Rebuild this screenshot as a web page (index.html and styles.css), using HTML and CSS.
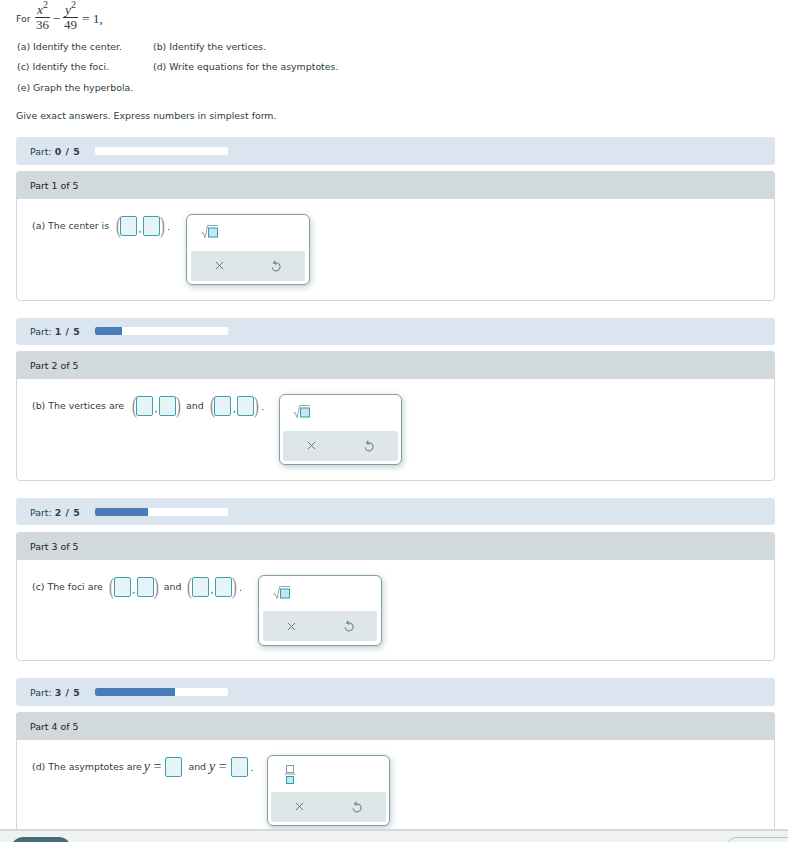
FILE: index.html
```html
<!DOCTYPE html>
<html lang="en">
<head>
<meta charset="utf-8">
<title>Hyperbola</title>
<link rel="stylesheet" href="styles.css">
</head>
<body>
<svg class="defs" width="0" height="0" aria-hidden="true">
  <symbol id="i-x" viewBox="0 0 10 10"><path d="M1 1l8 8M9 1L1 9" fill="none" stroke="#5b7a85" stroke-width="1.1"/></symbol>
  <symbol id="i-undo" viewBox="0 0 10 12"><path d="M3 3.4A4 4 0 1 1 1.1 7.2M4.2 .6L2.6 3.3l3 1" fill="none" stroke="#6d8892" stroke-width="1.1"/></symbol>
  <symbol id="i-sqrt" viewBox="0 0 17 13"><path d="M.3 8.3l1.7-.8 2.1 5L6.6 .5H17" fill="none" stroke="#8a9ba3" stroke-width=".9"/><rect x="7.5" y="3" width="9" height="9" fill="#c5e6ee" stroke="#2f9db1"/></symbol>
  <symbol id="i-frac" viewBox="0 0 12 19"><rect x="2.5" y=".5" width="7" height="7" fill="#fff" stroke="#8a9ba3"/><path d="M.5 9h11" stroke="#8a9ba3"/><rect x="2.5" y="11.5" width="7" height="7" fill="#c5e6ee" stroke="#2f9db1"/></symbol>
</svg>

<main class="page">
  <section class="problem">
    <div class="equation">
      <span class="for">For</span>
      <span class="frac"><span class="num"><i>x</i><sup>2</sup></span><span class="den">36</span></span>
      <span class="op minus">−</span>
      <span class="frac"><span class="num"><i>y</i><sup>2</sup></span><span class="den">49</span></span>
      <span class="op equals">=</span><span class="op">1,</span>
    </div>
    <div class="tasks">
      <span>(a) Identify the center.</span><span>(b) Identify the vertices.</span>
      <span>(c) Identify the foci.</span><span>(d) Write equations for the asymptotes.</span>
      <span>(e) Graph the hyperbola.</span>
    </div>
    <p class="note">Give exact answers. Express numbers in simplest form.</p>
  </section>

  <div class="progress"><span class="label">Part: <b>0 / 5</b></span><div class="track"><div class="fill" style="width:0%"></div></div></div>
  <section class="panel">
    <h2 class="panel-head">Part 1 of 5</h2>
    <div class="panel-body">
      <div class="answer"><span>(a) The center is</span>
        <span class="point"><span class="paren">(</span><span class="box"></span><span class="comma">,</span><span class="box"></span><span class="paren">)</span></span><span class="dot">.</span>
      </div>
      <div class="palette pal-a">
        <div class="pal-top"><svg class="ic-sqrt"><use href="#i-sqrt"/></svg></div>
        <div class="pal-bar"><span class="pal-btn"><svg class="ic-x"><use href="#i-x"/></svg></span><span class="pal-btn"><svg class="ic-undo"><use href="#i-undo"/></svg></span></div>
      </div>
    </div>
  </section>

  <div class="progress"><span class="label">Part: <b>1 / 5</b></span><div class="track"><div class="fill" style="width:20%"></div></div></div>
  <section class="panel">
    <h2 class="panel-head">Part 2 of 5</h2>
    <div class="panel-body">
      <div class="answer"><span>(b) The vertices are</span>
        <span class="point point-wide"><span class="paren">(</span><span class="box"></span><span class="comma">,</span><span class="box"></span><span class="paren">)</span></span>
        <span>and</span>
        <span class="point"><span class="paren">(</span><span class="box"></span><span class="comma">,</span><span class="box"></span><span class="paren">)</span></span><span class="dot">.</span>
      </div>
      <div class="palette pal-b">
        <div class="pal-top"><svg class="ic-sqrt"><use href="#i-sqrt"/></svg></div>
        <div class="pal-bar"><span class="pal-btn"><svg class="ic-x"><use href="#i-x"/></svg></span><span class="pal-btn"><svg class="ic-undo"><use href="#i-undo"/></svg></span></div>
      </div>
    </div>
  </section>

  <div class="progress"><span class="label">Part: <b>2 / 5</b></span><div class="track"><div class="fill" style="width:40%"></div></div></div>
  <section class="panel">
    <h2 class="panel-head">Part 3 of 5</h2>
    <div class="panel-body">
      <div class="answer"><span>(c) The foci are</span>
        <span class="point"><span class="paren">(</span><span class="box"></span><span class="comma">,</span><span class="box"></span><span class="paren">)</span></span>
        <span>and</span>
        <span class="point"><span class="paren">(</span><span class="box"></span><span class="comma">,</span><span class="box"></span><span class="paren">)</span></span><span class="dot">.</span>
      </div>
      <div class="palette pal-c">
        <div class="pal-top"><svg class="ic-sqrt"><use href="#i-sqrt"/></svg></div>
        <div class="pal-bar"><span class="pal-btn"><svg class="ic-x"><use href="#i-x"/></svg></span><span class="pal-btn"><svg class="ic-undo"><use href="#i-undo"/></svg></span></div>
      </div>
    </div>
  </section>

  <div class="progress"><span class="label">Part: <b>3 / 5</b></span><div class="track"><div class="fill" style="width:60%"></div></div></div>
  <section class="panel">
    <h2 class="panel-head">Part 4 of 5</h2>
    <div class="panel-body">
      <div class="answer"><span>(d) The asymptotes are</span>
        <span class="lhs"><i>y</i> =</span><span class="box"></span>
        <span class="and">and</span>
        <span class="lhs"><i>y</i> =</span><span class="box"></span><span class="dot">.</span>
      </div>
      <div class="palette pal-d">
        <div class="pal-top pal-top-frac"><svg class="ic-frac"><use href="#i-frac"/></svg></div>
        <div class="pal-bar"><span class="pal-btn"><svg class="ic-x"><use href="#i-x"/></svg></span><span class="pal-btn"><svg class="ic-undo"><use href="#i-undo"/></svg></span></div>
      </div>
    </div>
  </section>
</main>

<footer class="footer"><span class="btn-primary"></span><span class="btn-outline"></span></footer>
</body>
</html>
```

FILE: styles.css
```css
html, body { margin: 0; height: 842px; overflow: hidden; background: #fff; }
body { font-family: "DejaVu Sans", sans-serif; font-size: 9.4px; color: #2e3c42; line-height: 12px; }
.defs { position: absolute; }
.page { padding: 0 13px 0 16px; }

.problem { height: 137.2px; }
.equation { display: flex; align-items: flex-start; height: 34px; font-family: "Liberation Serif", serif; font-size: 13.5px; }
.for { font-family: "DejaVu Sans", sans-serif; font-size: 9.4px; margin-top: 13px; width: 19px; }
.frac { display: flex; flex-direction: column; align-items: center; width: 15px; }
.num { box-sizing: border-box; height: 18px; padding-top: 3px; border-bottom: 1px solid #333; width: 100%; text-align: center; line-height: 14px; white-space: nowrap; }
.num sup { font-size: 10px; line-height: 0; vertical-align: 6px; }
.den { line-height: 14px; font-size: 13px; }
.op { line-height: 16px; margin-top: 11px; }
.minus { width: 13px; text-align: center; }
.equals { margin: 11px 3px 0 4px; }

.tasks { display: grid; grid-template-columns: 136px auto; justify-content: start; row-gap: 8.5px; margin: 6.5px 0 0 1px; }
.note { margin: 16.5px 0 0; }

.progress { display: flex; align-items: center; height: 27.4px; padding-left: 14px; gap: 14px; background: #dae5ef; border-radius: 3px; }
.label { width: 51px; padding-top: 2px; white-space: nowrap; }
.label b { font-weight: 700; letter-spacing: .5px; }
.track { width: 133px; height: 8px; background: #fff; border-radius: 2px; overflow: hidden; }
.fill { height: 100%; background: #4a7db7; }

.panel { box-sizing: border-box; height: 129.6px; margin: 6.5px 0 16.9px; border: 1px solid #cfd8dc; border-radius: 4px; }
.panel-head { box-sizing: border-box; margin: -1px -1px 0; height: 28px; padding: 1px 0 0 14px; background: #d2d9dc; border-radius: 4px 4px 0 0; font-weight: 400; font-size: 9.4px; line-height: 27px; color: #222; }
.panel-body { display: flex; align-items: flex-start; padding: 15px 0 0 15px; }

.answer { display: flex; align-items: center; height: 22px; margin-top: 1px; white-space: nowrap; }
.point { display: inline-flex; align-items: center; margin-left: 6.5px; }
.point-wide { margin-left: 7.5px; }
.point + span:not(.dot) { margin-left: 5.5px; }
.point + span + .point { margin-left: 6px; }
.paren { display: inline-flex; justify-content: center; width: 4.5px; font-family: "Liberation Serif", serif; font-size: 23px; line-height: 20px; color: #888; transform: scaleX(.62); }
.box { box-sizing: border-box; width: 17px; height: 20px; background: #e6f4f8; border: 1px solid #3f9fae; border-radius: 2px; }
.comma { width: 6px; text-align: center; margin-top: 6px; }
.dot { margin-left: 2.5px; margin-top: 2px; }
.lhs { font-family: "Liberation Serif", serif; font-size: 14px; margin: 0 4px 0 2px; }
.and { margin-left: 6px; }
.and + .lhs { margin-left: 3px; }

.palette { box-sizing: border-box; width: 123.5px; height: 71px; padding: 0 3.5px 3.5px; background: #fff; border: 1px solid #7f9ea8; border-radius: 6px; box-shadow: 1px 2px 6px rgba(70, 100, 110, .35); display: flex; flex-direction: column; justify-content: space-between; }
.pal-a { margin-left: 16px; }
.pal-b { margin-left: 14.5px; }
.pal-c { margin-left: 16.5px; }
.pal-d { margin-left: 13.5px; }
.pal-top { padding: 10px 0 0 10px; line-height: 0; }
.pal-top-frac { padding: 9px 0 0 13px; }
.ic-sqrt { width: 17px; height: 13px; }
.ic-frac { width: 12px; height: 19px; }
.pal-bar { display: flex; height: 30px; background: #dfe6e8; border-radius: 2px; }
.pal-btn { flex: 1; display: flex; align-items: center; justify-content: center; }
.ic-x { width: 9px; height: 9px; }
.ic-undo { width: 10px; height: 12px; }

.footer { position: fixed; left: 0; right: 0; bottom: 0; height: 11px; background: #eef2f3; border-top: 2px solid #d2d9dc; overflow: hidden; }
.btn-primary { position: absolute; left: 11px; top: 6px; width: 60px; height: 24px; background: #466a75; border-radius: 12px; }
.btn-outline { position: absolute; left: 725px; top: 6px; width: 80px; height: 24px; border: 1px solid #b5c3c8; border-radius: 12px; background: #eef2f3; }
```
